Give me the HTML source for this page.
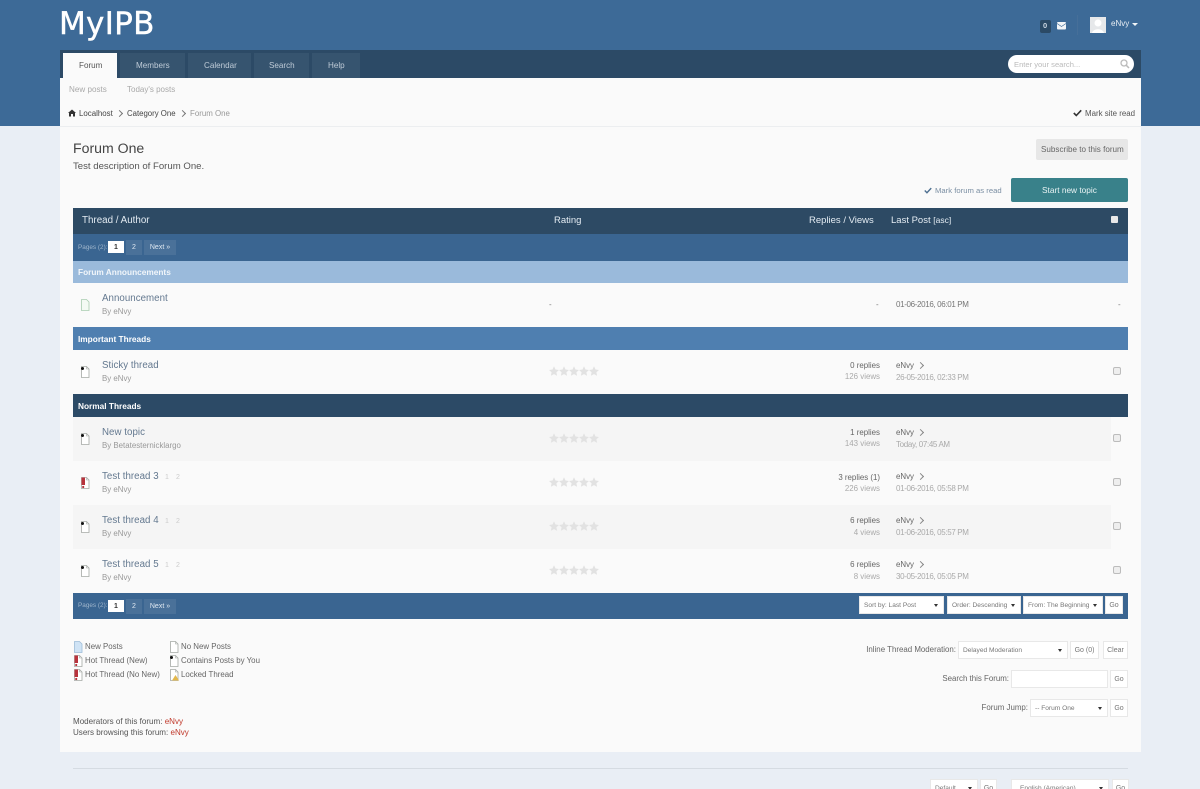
<!DOCTYPE html>
<html><head><meta charset="utf-8"><title>Forum One</title>
<style>
html,body{margin:0;padding:0;width:1200px;height:789px;overflow:hidden}
body{background:#e9eef5;font-family:"Liberation Sans",sans-serif;font-size:8px;color:#555}
#w{position:relative;width:1200px;height:789px;overflow:hidden}
.b{position:absolute}
.t{position:absolute;white-space:nowrap;line-height:14px}
.r{text-align:right}
.sel,.btn{position:absolute;background:#fff;border:1px solid #e8e8e8;box-sizing:border-box;font-size:6.600px;line-height:17px;color:#777;white-space:nowrap;padding-left:4px}
.btn{padding:0;text-align:center;font-size:7px}
.sel:after{content:"";position:absolute;right:5px;top:7px;border:2.500px solid transparent;border-top:3.500px solid #333;border-bottom:0}
.sel.no:after{display:none}
.pg{position:absolute;height:15px;line-height:16px;text-align:center;font-size:7px;color:#dfe8f1;background:#4a7199}
.ttl{font-size:9.700px;color:#63788f;letter-spacing:.05px}
.by{font-size:7.900px;color:#999}
.sm{font-size:7.900px;color:#777}
.lt{font-size:7.900px;color:#aaa}
.dt{font-size:8px;letter-spacing:-.35px;color:#aaa}
.cb{position:absolute;left:1113px;width:6px;height:6px;border:1px solid #bcbcbc;border-radius:2px;background:#eee}
.hd{font-size:9.800px;color:#e4ecf3}
.sec{font-size:8.300px;font-weight:bold;color:#fff;margin-top:-1px}
.chev{position:absolute;width:4px;height:4px;border-top:1px solid #777;border-right:1px solid #777;transform:rotate(45deg)}
.n{font-size:7px;color:#ccc}
.f{font-size:7.900px;color:#666}
</style></head><body><div id="w">

<svg width="0" height="0" style="position:absolute"><defs>
<symbol id="star" viewBox="0 0 10 10"><path d="M5 .3 6.500 3.500 10 4 7.400 6.300 8.100 9.800 5 8.100 1.900 9.800 2.600 6.300 0 4 3.500 3.500Z" fill="#e2e2e2"/></symbol>
<symbol id="stars" viewBox="0 0 50 10"><use href="#star" width="10" height="10" x="0"/><use href="#star" width="10" height="10" x="10"/><use href="#star" width="10" height="10" x="20"/><use href="#star" width="10" height="10" x="30"/><use href="#star" width="10" height="10" x="40"/></symbol>
<symbol id="doc" viewBox="0 0 10 12"><path d="M1.500 .5H6.500L9 3V11.500H1.500Z" fill="#fff" stroke="#a5a9a5" stroke-width=".8"/><path d="M6.500 .5V3H9" fill="none" stroke="#a5a9a5" stroke-width=".6"/></symbol>
<symbol id="docg" viewBox="0 0 10 12"><path d="M1.500 .5H6.500L9 3V11.500H1.500Z" fill="#f4fbf4" stroke="#a9cdb0" stroke-width=".8"/></symbol>
<symbol id="docd" viewBox="0 0 10 12"><use href="#doc" width="10" height="12"/><circle cx="2.500" cy="2.500" r="1.500" fill="#111"/></symbol>
<symbol id="docr" viewBox="0 0 10 12"><use href="#doc" width="10" height="12"/><path d="M1.500 .5H5V8H1.500Z" fill="#b8323c"/><circle cx="3.200" cy="10" r="1.100" fill="#b8323c"/></symbol>
<symbol id="docb" viewBox="0 0 10 12"><path d="M1.500 .5H6.500L9 3V11.500H1.500Z" fill="#cfe3f5" stroke="#9dbcd8" stroke-width=".8"/></symbol>
<symbol id="docl" viewBox="0 0 10 12"><use href="#doc" width="10" height="12"/><path d="M3 11.500 6.500 6 10 11.500Z" fill="#e3b84c"/></symbol>
</defs></svg>

<!-- header -->
<div class="b" style="left:0;top:0;width:1200px;height:126px;background:#3d6a97"></div>
<div class="t" style="left:59px;top:4px;font-size:31px;line-height:40px;color:#fff;letter-spacing:.3px;font-family:'DejaVu Sans',sans-serif;-webkit-text-stroke:.4px #fff">MyIPB</div>
<div class="b" style="left:1040px;top:20px;width:11px;height:13px;background:#2b4a66;border-radius:2px"></div>
<div class="t" style="left:1043px;top:19px;font-size:7.500px;color:#cdd8e3;font-weight:bold">0</div>
<svg class="b" style="left:1057px;top:22px" width="9" height="8" viewBox="0 0 9 8"><rect width="9" height="7.500" rx="1" fill="#f2f5f8"/><path d="M0 1.500 4.500 4.500 9 1.500" fill="none" stroke="#3d6a97" stroke-width=".7"/></svg>
<div class="b" style="left:1077px;top:15px;width:1px;height:20px;background:#466f99"></div>
<svg class="b" style="left:1090px;top:17px" width="16" height="16" viewBox="0 0 16 16"><rect width="16" height="16" fill="#e6e8ea"/><circle cx="8" cy="6" r="3.500" fill="#fff"/><path d="M2 16C3 11 13 11 14 16Z" fill="#fff"/></svg>
<div class="t" style="left:1111px;top:17px;color:#e8eef4;font-size:8px">eNvy</div>
<div class="b" style="left:1132px;top:23px;border:3px solid transparent;border-top:3px solid #f2f5f8;border-bottom:0"></div>

<!-- container -->
<div class="b" style="left:60px;top:50px;width:1081px;height:28px;background:#2c4a66"></div>
<div class="b" style="left:60px;top:78px;width:1081px;height:674px;background:#fafafa"></div>
<div class="b" style="left:60px;top:126px;width:1081px;height:1px;background:#eceef0"></div>

<div class="b" style="left:63px;top:53px;width:54px;height:25px;background:#fafafa"></div>
<div class="b" style="left:120px;top:53px;width:65px;height:25px;background:#36546f"></div>
<div class="b" style="left:188px;top:53px;width:63px;height:25px;background:#36546f"></div>
<div class="b" style="left:254px;top:53px;width:55px;height:25px;background:#36546f"></div>
<div class="b" style="left:312px;top:53px;width:48px;height:25px;background:#36546f"></div>
<div class="t" style="left:79px;top:59px;font-size:8.100px;color:#555">Forum</div>
<div class="t" style="left:136px;top:59px;font-size:8.100px;color:#bfcbd7">Members</div>
<div class="t" style="left:204px;top:59px;font-size:8.100px;color:#bfcbd7">Calendar</div>
<div class="t" style="left:269px;top:59px;font-size:8.100px;color:#bfcbd7">Search</div>
<div class="t" style="left:328px;top:59px;font-size:8.100px;color:#bfcbd7">Help</div>
<div class="b" style="left:1008px;top:55px;width:126px;height:18px;background:#fff;border-radius:9px"></div>
<div class="t" style="left:1014px;top:58px;font-size:7.600px;color:#bbb">Enter your search...</div>
<svg class="b" style="left:1120px;top:59px" width="10" height="10" viewBox="0 0 10 10"><circle cx="4" cy="4" r="3" fill="none" stroke="#bbb" stroke-width="1.300"/><path d="M6.300 6.300 9 9" stroke="#bbb" stroke-width="1.500"/></svg>

<div class="t" style="left:69px;top:83px;font-size:8.100px;color:#a9a9a9">New posts</div>
<div class="t" style="left:127px;top:83px;font-size:8px;color:#a9a9a9">Today's posts</div>

<svg class="b" style="left:68px;top:109px" width="8" height="8" viewBox="0 0 8 8"><path d="M4 .5 8 4 7 4V7.500H5V5H3V7.500H1V4H0Z" fill="#333"/></svg>
<div class="t" style="left:79px;top:107px;font-size:7.900px;color:#444">Localhost</div>
<div class="chev" style="left:117px;top:111px"></div>
<div class="t" style="left:127px;top:107px;font-size:7.800px;color:#444">Category One</div>
<div class="chev" style="left:180px;top:111px"></div>
<div class="t" style="left:190px;top:107px;font-size:7.900px;color:#999">Forum One</div>
<svg class="b" style="left:1073px;top:109px" width="9" height="8" viewBox="0 0 9 8"><path d="M.8 4 3.300 6.500 8.200 1.300" fill="none" stroke="#333" stroke-width="1.600"/></svg>
<div class="t" style="left:1085px;top:107px;font-size:7.900px;color:#555">Mark site read</div>

<!-- title -->
<div class="t" style="left:73px;top:140px;font-size:14.100px;line-height:17px;color:#444">Forum One</div>
<div class="t" style="left:73px;top:160px;font-size:9.600px;color:#555">Test description of Forum One.</div>
<div class="b" style="left:1036px;top:139px;width:92px;height:21px;background:#e7e7e7;border-radius:2px"></div>
<div class="t" style="left:1041px;top:143px;font-size:8.100px;color:#666">Subscribe to this forum</div>
<svg class="b" style="left:924px;top:187px" width="8" height="7" viewBox="0 0 9 8"><path d="M.8 4 3.300 6.500 8.200 1.300" fill="none" stroke="#4d6f90" stroke-width="1.600"/></svg>
<div class="t" style="left:935px;top:184px;font-size:7.700px;color:#7b8fa3">Mark forum as read</div>
<div class="b" style="left:1011px;top:178px;width:117px;height:24px;background:#39818a;border-radius:2px"></div>
<div class="t" style="left:1042px;top:183px;font-size:8.300px;color:#e9f3f4">Start new topic</div>

<!-- table -->
<div class="b" style="left:73px;top:208px;width:1055px;height:26px;background:#2d4a64"></div>
<div class="t hd" style="left:82px;top:214px">Thread / Author</div>
<div class="t hd" style="left:554px;top:214px;font-size:9.500px">Rating</div>
<div class="t hd" style="left:809px;top:214px;font-size:9.500px">Replies / Views</div>
<div class="t hd" style="left:891px;top:213px;font-size:9.500px">Last Post <span style="font-size:8.500px">[asc]</span></div>
<div class="b" style="left:1111px;top:216px;width:7px;height:7px;background:#e8e8e8;border-radius:1px"></div>

<div class="b" style="left:73px;top:234px;width:1055px;height:27px;background:#3a6591"></div>
<div class="t" style="left:78px;top:241px;font-size:6.400px;color:#9fb5cb">Pages (2):</div>
<div class="pg" style="left:108px;top:241px;width:16px;height:12px;line-height:13px;background:#fff;color:#333;font-weight:bold">1</div>
<div class="pg" style="left:126px;top:240px;width:16px">2</div>
<div class="pg" style="left:144px;top:240px;width:32px">Next »</div>

<div class="b" style="left:73px;top:261px;width:1055px;height:22px;background:#9abadb"></div>
<div class="t sec" style="left:78px;top:266px;color:#f2f6fa">Forum Announcements</div>

<svg class="b" style="left:80px;top:299px" width="10" height="12"><use href="#docg" width="10" height="12"/></svg>
<div class="t ttl" style="left:102px;top:292px">Announcement</div>
<div class="t by" style="left:102px;top:305px">By eNvy</div>
<div class="t sm" style="left:549px;top:298px">-</div>
<div class="t sm" style="left:876px;top:298px">-</div>
<div class="t dt" style="left:896px;top:298px;color:#777">01-06-2016, 06:01 PM</div>
<div class="t sm" style="left:1118px;top:298px">-</div>

<div class="b" style="left:73px;top:327px;width:1055px;height:23px;background:#4f7fb0"></div>
<div class="t sec" style="left:78px;top:333px">Important Threads</div>

<svg class="b" style="left:80px;top:366px" width="10" height="12"><use href="#docd" width="10" height="12"/></svg>
<div class="t ttl" style="left:102px;top:359px">Sticky thread</div>
<div class="t by" style="left:102px;top:372px">By eNvy</div>
<svg class="b" style="left:549px;top:366px" width="50" height="11"><use href="#stars" width="50" height="10"/></svg>
<div class="t sm r" style="left:800px;width:80px;top:359px;color:#666">0 replies</div>
<div class="t lt r" style="left:800px;width:80px;top:370px">126 views</div>
<div class="t sm" style="left:896px;top:359px;color:#666">eNvy</div>
<div class="chev" style="left:918px;top:363px;border-color:#888"></div>
<div class="t dt" style="left:896px;top:371px">26-05-2016, 02:33 PM</div>
<div class="cb" style="top:367px"></div>

<div class="b" style="left:73px;top:394px;width:1055px;height:23px;background:#2c4a66"></div>
<div class="t sec" style="left:78px;top:400px">Normal Threads</div>

<div class="b" style="left:73px;top:417px;width:1038px;height:44px;background:#f5f5f5"></div>
<svg class="b" style="left:80px;top:433px" width="10" height="12"><use href="#docd" width="10" height="12"/></svg>
<div class="t ttl" style="left:102px;top:426px">New topic</div>
<div class="t by" style="left:102px;top:439px">By Betatesternicklargo</div>
<svg class="b" style="left:549px;top:433px" width="50" height="11"><use href="#stars" width="50" height="10"/></svg>
<div class="t sm r" style="left:800px;width:80px;top:426px;color:#666">1 replies</div>
<div class="t lt r" style="left:800px;width:80px;top:437px">143 views</div>
<div class="t sm" style="left:896px;top:426px;color:#666">eNvy</div>
<div class="chev" style="left:918px;top:430px;border-color:#888"></div>
<div class="t dt" style="left:896px;top:438px">Today, 07:45 AM</div>
<div class="cb" style="top:434px"></div>

<svg class="b" style="left:80px;top:477px" width="10" height="12"><use href="#docr" width="10" height="12"/></svg>
<div class="t ttl" style="left:102px;top:470px">Test thread 3</div>
<div class="t n" style="left:165px;top:471px">1</div><div class="t n" style="left:176px;top:471px">2</div>
<div class="t by" style="left:102px;top:483px">By eNvy</div>
<svg class="b" style="left:549px;top:477px" width="50" height="11"><use href="#stars" width="50" height="10"/></svg>
<div class="t sm r" style="left:800px;width:80px;top:471px;color:#666">3 replies (1)</div>
<div class="t lt r" style="left:800px;width:80px;top:482px">226 views</div>
<div class="t sm" style="left:896px;top:470px;color:#666">eNvy</div>
<div class="chev" style="left:918px;top:474px;border-color:#888"></div>
<div class="t dt" style="left:896px;top:482px">01-06-2016, 05:58 PM</div>
<div class="cb" style="top:478px"></div>

<div class="b" style="left:73px;top:505px;width:1038px;height:44px;background:#f5f5f5"></div>
<svg class="b" style="left:80px;top:521px" width="10" height="12"><use href="#docd" width="10" height="12"/></svg>
<div class="t ttl" style="left:102px;top:514px">Test thread 4</div>
<div class="t n" style="left:165px;top:515px">1</div><div class="t n" style="left:176px;top:515px">2</div>
<div class="t by" style="left:102px;top:527px">By eNvy</div>
<svg class="b" style="left:549px;top:521px" width="50" height="11"><use href="#stars" width="50" height="10"/></svg>
<div class="t sm r" style="left:800px;width:80px;top:514px;color:#666">6 replies</div>
<div class="t lt r" style="left:800px;width:80px;top:526px">4 views</div>
<div class="t sm" style="left:896px;top:514px;color:#666">eNvy</div>
<div class="chev" style="left:918px;top:518px;border-color:#888"></div>
<div class="t dt" style="left:896px;top:526px">01-06-2016, 05:57 PM</div>
<div class="cb" style="top:522px"></div>

<svg class="b" style="left:80px;top:565px" width="10" height="12"><use href="#docd" width="10" height="12"/></svg>
<div class="t ttl" style="left:102px;top:558px">Test thread 5</div>
<div class="t n" style="left:165px;top:559px">1</div><div class="t n" style="left:176px;top:559px">2</div>
<div class="t by" style="left:102px;top:571px">By eNvy</div>
<svg class="b" style="left:549px;top:565px" width="50" height="11"><use href="#stars" width="50" height="10"/></svg>
<div class="t sm r" style="left:800px;width:80px;top:558px;color:#666">6 replies</div>
<div class="t lt r" style="left:800px;width:80px;top:570px">8 views</div>
<div class="t sm" style="left:896px;top:558px;color:#666">eNvy</div>
<div class="chev" style="left:918px;top:562px;border-color:#888"></div>
<div class="t dt" style="left:896px;top:570px">30-05-2016, 05:05 PM</div>
<div class="cb" style="top:566px"></div>

<div class="b" style="left:73px;top:593px;width:1055px;height:26px;background:#3a6591"></div>
<div class="t" style="left:78px;top:599px;font-size:6.400px;color:#9fb5cb">Pages (2):</div>
<div class="pg" style="left:108px;top:600px;width:16px;height:12px;line-height:13px;background:#fff;color:#333;font-weight:bold">1</div>
<div class="pg" style="left:126px;top:599px;width:16px">2</div>
<div class="pg" style="left:144px;top:599px;width:32px">Next »</div>
<div class="sel" style="left:859px;top:596px;width:85px;height:18px">Sort by: Last Post</div>
<div class="sel" style="left:947px;top:596px;width:74px;height:18px">Order: Descending</div>
<div class="sel" style="left:1023px;top:596px;width:80px;height:18px">From: The Beginning</div>
<div class="btn" style="left:1105px;top:596px;width:18px;height:18px">Go</div>

<!-- legend -->
<svg class="b" style="left:73px;top:641px" width="10" height="12"><use href="#docb" width="10" height="12"/></svg>
<svg class="b" style="left:73px;top:655px" width="10" height="12"><use href="#docr" width="10" height="12"/></svg>
<svg class="b" style="left:73px;top:669px" width="10" height="12"><use href="#docr" width="10" height="12"/></svg>
<div class="t f" style="left:85px;top:640px">New Posts</div>
<div class="t f" style="left:85px;top:654px">Hot Thread (New)</div>
<div class="t f" style="left:85px;top:668px">Hot Thread (No New)</div>
<svg class="b" style="left:169px;top:641px" width="10" height="12"><use href="#doc" width="10" height="12"/></svg>
<svg class="b" style="left:169px;top:655px" width="10" height="12"><use href="#docd" width="10" height="12"/></svg>
<svg class="b" style="left:169px;top:669px" width="10" height="12"><use href="#docl" width="10" height="12"/></svg>
<div class="t f" style="left:181px;top:640px">No New Posts</div>
<div class="t f" style="left:181px;top:654px">Contains Posts by You</div>
<div class="t f" style="left:181px;top:668px">Locked Thread</div>
<div class="t" style="left:73px;top:715px;font-size:8.050px;color:#555">Moderators of this forum: <span style="color:#c0392b">eNvy</span></div>
<div class="t" style="left:73px;top:726px;font-size:8.050px;color:#555">Users browsing this forum: <span style="color:#c0392b">eNvy</span></div>

<!-- right forms -->
<div class="t r f" style="left:800px;width:156px;top:643px">Inline Thread Moderation:</div>
<div class="sel" style="left:958px;top:641px;width:110px;height:18px">Delayed Moderation</div>
<div class="btn" style="left:1070px;top:641px;width:29px;height:18px">Go (0)</div>
<div class="btn" style="left:1103px;top:641px;width:25px;height:18px">Clear</div>
<div class="t r f" style="left:900px;width:109px;top:672px">Search this Forum:</div>
<div class="sel no" style="left:1011px;top:670px;width:97px;height:18px;padding:0"></div>
<div class="btn" style="left:1110px;top:670px;width:18px;height:18px">Go</div>
<div class="t r f" style="left:900px;width:128px;top:701px">Forum Jump:</div>
<div class="sel" style="left:1030px;top:699px;width:78px;height:18px">-- Forum One</div>
<div class="btn" style="left:1110px;top:699px;width:18px;height:18px">Go</div>

<!-- footer -->
<div class="b" style="left:73px;top:768px;width:1055px;height:1px;background:#d5dbe2"></div>
<div class="sel" style="left:930px;top:779px;width:48px;height:18px">Default</div>
<div class="btn" style="left:980px;top:779px;width:17px;height:18px">Go</div>
<div class="sel" style="left:1011px;top:779px;width:98px;height:18px;padding-left:8px">English (American)</div>
<div class="btn" style="left:1112px;top:779px;width:17px;height:18px">Go</div>
</div></body></html>
